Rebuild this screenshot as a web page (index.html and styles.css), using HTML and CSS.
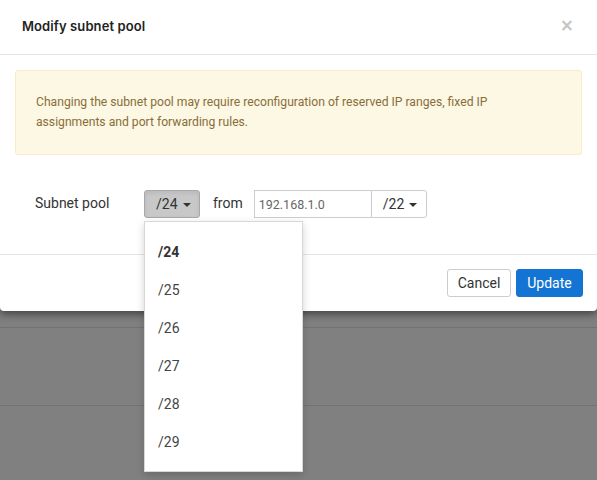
FILE: index.html
```html
<!DOCTYPE html>
<html>
<head>
<meta charset="utf-8">
<link rel="stylesheet" href="styles.css">
</head>
<body>
<div class="dialog">
  <div class="dialog-header">
    <h4 class="dialog-title">Modify subnet pool</h4>
    <button class="close" type="button">×</button>
  </div>
  <div class="dialog-body">
    <div class="alert">Changing the subnet pool may require reconfiguration of reserved IP ranges, fixed IP assignments and port forwarding rules.</div>
    <div class="form-row">
      <label class="form-label">Subnet pool</label>
      <div class="select-wrap">
        <button class="btn btn-select active" type="button">/24 <span class="caret"></span></button>
        <ul class="menu">
          <li class="menu-item selected">/24</li>
          <li class="menu-item">/25</li>
          <li class="menu-item">/26</li>
          <li class="menu-item">/27</li>
          <li class="menu-item">/28</li>
          <li class="menu-item">/29</li>
        </ul>
      </div>
      <span class="from">from</span>
      <div class="input-group">
        <input class="ip-input" type="text" value="192.168.1.0">
        <button class="btn btn-select" type="button">/22 <span class="caret"></span></button>
      </div>
    </div>
  </div>
  <div class="dialog-footer">
    <button class="btn btn-default" type="button">Cancel</button>
    <button class="btn btn-primary" type="button">Update</button>
  </div>
</div>
</body>
</html>
```
FILE: styles.css
```css
html, body {
  margin: 0;
  padding: 0;
}
body {
  width: 597px;
  height: 480px;
  overflow: hidden;
  background-color: #808080;
  background-image:
    linear-gradient(#727272, #727272),
    linear-gradient(#727272, #727272);
  background-size: 100% 1px, 100% 1px;
  background-position: 0 327px, 0 405px;
  background-repeat: no-repeat;
  font-family: Roboto, "Liberation Sans", sans-serif;
  font-size: 14px;
  color: #333;
}
.dialog {
  width: 597px;
  background: #fff;
  border-radius: 0 0 4px 4px;
  box-shadow: 0 3px 9px rgba(0, 0, 0, 0.5);
}
.dialog-header {
  height: 55px;
  box-sizing: border-box;
  border-bottom: 1px solid #e5e5e5;
  display: flex;
  align-items: center;
  justify-content: space-between;
  padding: 0 23px 3px 22px;
}
.dialog-title {
  margin: 0;
  font-family: Inter, "Noto Sans", sans-serif;
  font-weight: 600;
  font-size: 13px;
  color: #222;
  letter-spacing: 0.1px;
}
.close {
  border: 0;
  background: transparent;
  font-family: "DejaVu Sans", sans-serif;
  font-size: 17px;
  font-weight: bold;
  color: #c4c4c4;
  padding: 0;
  line-height: 1;
}
.dialog-body {
  padding: 15px 15px 0;
}
.alert {
  background: #fcf8e3;
  border: 1px solid #faebcc;
  border-radius: 3px;
  color: #8a6d3b;
  font-size: 12.15px;
  line-height: 20px;
  padding: 21px 50px 22px 20px;
}
.form-row {
  display: flex;
  align-items: center;
  padding: 35px 0 36px 20px;
  height: 28px;
}
.form-label {
  width: 109px;
  color: #333;
  padding-bottom: 2px;
}
.select-wrap {
  position: relative;
}
.btn {
  font-family: Roboto, "Liberation Sans", sans-serif;
  font-size: 14px;
  height: 28px;
  box-sizing: border-box;
  border: 1px solid #ccc;
  border-radius: 3px;
  background: #fff;
  color: #333;
  padding: 0 11px;
  display: inline-flex;
  align-items: center;
  gap: 5px;
}
.btn-select {
  width: 56px;
  padding: 0 11px;
}
.btn-select.active {
  background: #c8c8c8;
  border-color: #a8a8a8;
  box-shadow: inset 0 2px 4px rgba(0, 0, 0, 0.08);
}
.caret {
  display: inline-block;
  width: 0;
  height: 0;
  border-top: 4px solid #333;
  border-left: 4px solid transparent;
  border-right: 4px solid transparent;
  margin-top: 1px;
}
.from {
  margin: 0 11px 0 13px;
  padding-bottom: 2px;
}
.input-group {
  display: flex;
}
.ip-input {
  width: 117px;
  height: 28px;
  box-sizing: border-box;
  border: 1px solid #ccc;
  border-right: 0;
  font-family: Roboto, "Liberation Sans", sans-serif;
  font-size: 12.5px;
  color: #666;
  padding: 0 4px;
  margin: 0;
  outline: none;
}
.input-group .btn-select {
  border-radius: 0 3px 3px 0;
}
.menu {
  position: absolute;
  top: 31px;
  left: 0;
  width: 159px;
  box-sizing: border-box;
  margin: 0;
  padding: 11px 0 10px;
  list-style: none;
  background: #fff;
  border: 1px solid #d8d8d8;
  box-shadow: 0 3px 8px rgba(0, 0, 0, 0.18);
  z-index: 10;
}
.menu-item {
  height: 38px;
  line-height: 38px;
  padding-left: 13px;
  color: #444;
}
.menu-item.selected {
  font-weight: bold;
  color: #333;
}
.dialog-footer {
  border-top: 1px solid #e5e5e5;
  display: flex;
  justify-content: flex-end;
  gap: 5px;
  padding: 14px 14px 14px;
}
.btn-default {
  width: 64px;
  justify-content: center;
}
.btn-primary {
  width: 67px;
  justify-content: center;
  background: #1474d4;
  border-color: #1474d4;
  color: #fff;
}
```
